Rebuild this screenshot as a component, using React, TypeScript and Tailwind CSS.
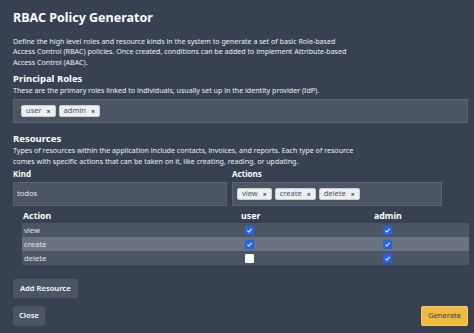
import { useState } from "react";

type Perm = { action: string; user: boolean; admin: boolean };

const Tag = ({ label }: { label: string }) => (
  <span className="inline-flex h-[12px] items-center gap-[5px] rounded-[2px] border border-[#c9ccd1] bg-[#eceef0] px-[4px] text-[7.5px] leading-none text-[#4b5563]">
    {label}
    <span className="text-[7px] font-bold text-[#374151]">×</span>
  </span>
);

const Check = ({ on }: { on: boolean }) =>
  on ? (
    <span className="flex h-[9px] w-[9px] items-center justify-center rounded-[1.5px] bg-[#2563eb]">
      <svg viewBox="0 0 10 10" className="h-[7px] w-[7px]">
        <path d="M2 5.2 L4.1 7.2 L8 2.8" fill="none" stroke="white" strokeWidth="1.5" />
      </svg>
    </span>
  ) : (
    <span className="block h-[9px] w-[9px] rounded-[1px] bg-white" />
  );

export default function App() {
  const [perms] = useState<Perm[]>([
    { action: "view", user: true, admin: true },
    { action: "create", user: true, admin: true },
    { action: "delete", user: false, admin: true },
  ]);

  return (
    <div className="h-[333px] w-[474px] overflow-hidden bg-[#374151] pl-[13px] pr-[6px] pt-[8px] font-['Noto_Sans',sans-serif] text-white">
      <h1 className="text-[12.5px] font-bold leading-[20px]">RBAC Policy Generator</h1>
      <p className="mt-[8px] whitespace-nowrap text-[7.1px] leading-[10.4px] text-[#eef0f3]">
        Define the high level roles and resource kinds in the system to generate a set of basic Role-based
        <br />
        Access Control (RBAC) policies. Once created, conditions can be added to implement Attribute-based
        <br />
        Access Control (ABAC).
      </p>

      <h2 className="mt-[5px] text-[9.5px] font-bold leading-[13px]">Principal Roles</h2>
      <p className="whitespace-nowrap text-[7.1px] leading-[10px] text-[#eef0f3]">
        These are the primary roles linked to individuals, usually set up in the identity provider (IdP).
      </p>
      <div className="mt-[4px] flex h-[24px] items-center gap-[3px] border border-[#5b6373] bg-[#4b5563] px-[7px]">
        <Tag label="user" />
        <Tag label="admin" />
      </div>

      <h2 className="mt-[9px] text-[9.5px] font-bold leading-[13px]">Resources</h2>
      <p className="whitespace-nowrap text-[7.1px] leading-[10.4px] text-[#eef0f3]">
        Types of resources within the application include contacts, invoices, and reports. Each type of resource
        <br />
        comes with specific actions that can be taken on it, like creating, reading, or updating.
      </p>

      <div className="mt-[1px] flex gap-[5px] pr-[26px]">
        <div className="w-[214px]">
          <div className="text-[8px] font-bold leading-[14px]">Kind</div>
          <div className="mt-[1px] flex h-[24px] items-center border border-[#5b6373] bg-[#4b5563] px-[3px] text-[7.6px] text-[#e5e7eb]">
            todos
          </div>
        </div>
        <div className="flex-1">
          <div className="text-[8px] font-bold leading-[14px]">Actions</div>
          <div className="mt-[1px] flex h-[24px] items-center gap-[3px] border border-[#5b6373] bg-[#4b5563] px-[4px]">
            <Tag label="view" />
            <Tag label="create" />
            <Tag label="delete" />
          </div>
        </div>
      </div>

      <table className="ml-[9px] mt-[4px] w-[447px] border-collapse text-left">
        <thead>
          <tr className="text-[8.8px] font-bold leading-[13px]">
            <th className="w-[218px] pl-[1px]">Action</th>
            <th className="w-[134px] pl-[1px]">user</th>
            <th className="pl-0">admin</th>
          </tr>
        </thead>
        <tbody className="text-[7.6px] text-[#e5e7eb]">
          {perms.map((p, i) => (
            <tr key={p.action} className={i === 1 ? "h-[14px] bg-[#6b7280]" : "h-[14px] bg-[#4b5563]"}>
              <td className="pl-[2px] leading-[14px]">{p.action}</td>
              <td className="pl-[5px]">
                <Check on={p.user} />
              </td>
              <td className="pl-[9px]">
                <Check on={p.admin} />
              </td>
            </tr>
          ))}
        </tbody>
      </table>

      <button
        type="button"
        className="mt-[14px] block h-[19px] rounded-[2px] bg-[#4b5563] px-[7px] text-[7.6px] font-semibold text-white"
      >
        Add Resource
      </button>

      <div className="mt-[8px] flex items-center justify-between">
        <button
          type="button"
          className="h-[20px] rounded-[2px] bg-[#4b5563] px-[6px] text-[7.6px] font-semibold text-white"
        >
          Close
        </button>
        <button
          type="button"
          className="h-[20px] rounded-[2px] border border-[#f7cf6b] bg-[#f1ba42] px-[6px] text-[7.6px] text-[#374151]"
        >
          Generate
        </button>
      </div>
    </div>
  );
}
